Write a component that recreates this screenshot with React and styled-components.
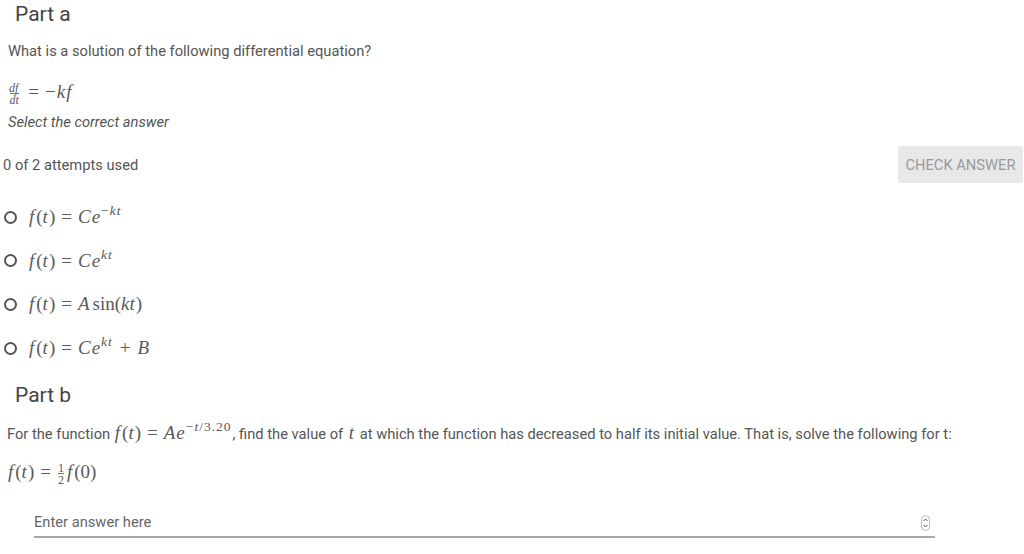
import React from 'react';
import styled, { createGlobalStyle } from 'styled-components';

const GlobalStyle = createGlobalStyle`
  body {
    margin: 0;
    background: #fff;
    font-family: Roboto, "Liberation Sans", sans-serif;
    color: #555;
  }
`;

const Page = styled.div`
  width: 1024px;
  height: 554px;
  overflow: hidden;
`;

const Heading = styled.h2`
  margin: 0;
  padding: ${({ top }) => top}px 0 0 15px;
  font-size: 21px;
  font-weight: 400;
  line-height: 28px;
  color: #444;
`;

const Text = styled.p`
  margin: ${({ top }) => top}px 0 0 ${({ left }) => left || 8}px;
  font-size: 14.7px;
  line-height: 20px;
  font-style: ${({ italic }) => (italic ? 'italic' : 'normal')};
`;

const MathLine = styled.div`
  margin: ${({ top }) => top}px 0 0 8px;
  height: 24px;
  display: flex;
  align-items: center;
`;

const M = styled.span`
  font-family: "Liberation Serif", "DejaVu Serif", serif;
  font-size: 19px;
  color: #5a5a5a;
  white-space: nowrap;
  padding: 0 ${({ pad }) => pad || 0}px;
`;

const I = styled.i`
  font-style: italic;
  padding-right: ${({ pr }) => pr || 0}px;
  padding-left: ${({ pl }) => pl || 0}px;
`;

const Op = styled.span`
  padding: 0 ${({ gap }) => (gap === undefined ? 6 : gap)}px;
`;

const Sup = styled.sup`
  font-size: 13.5px;
  vertical-align: 8px;
  line-height: 0;
  padding-left: 1px;
  letter-spacing: 1px;
`;

const Frac = styled.span`
  display: inline-flex;
  flex-direction: column;
  align-items: center;
  vertical-align: middle;
  font-size: 12px;
  line-height: 10px;
  margin: 0 3px 0 1px;
  span + span {
    border-top: 1px solid #777;
    padding-top: 1px;
  }
`;

const AttemptsRow = styled.div`
  margin-top: 14px;
  display: flex;
  justify-content: space-between;
  align-items: center;
  padding: 0 1px 0 3px;
  font-size: 14.7px;
`;

const CheckButton = styled.button`
  width: 125px;
  height: 37px;
  border: none;
  border-radius: 3px;
  background: #e8e8e8;
  color: #9a9a9a;
  font-family: Roboto, "Liberation Sans", sans-serif;
  font-size: 14.7px;
  padding: 0;
`;

const Options = styled.div`
  margin-top: 22px;
  display: flex;
  flex-direction: column;
  gap: 19.7px;
`;

const Option = styled.label`
  display: flex;
  align-items: center;
  height: 24px;
  padding-left: 4px;
  gap: 12px;
`;

const Radio = styled.span`
  width: 9px;
  height: 9px;
  border: 2px solid #555;
  border-radius: 50%;
`;

const InputWrap = styled.div`
  position: relative;
  margin: 24px 0 0 34px;
  width: 901px;
  border-bottom: 2px solid #a8a8a8;
`;

const AnswerInput = styled.input`
  width: 100%;
  box-sizing: border-box;
  border: none;
  outline: none;
  padding: 4px 0 5px;
  font-family: Roboto, "Liberation Sans", sans-serif;
  font-size: 14.7px;
  color: #555;
  background: transparent;
  &::placeholder {
    color: #666;
  }
`;

const Spinner = styled.svg`
  position: absolute;
  right: 5px;
  top: 6px;
`;

const Eq = () => <Op>=</Op>;

export default function App() {
  return (
    <Page>
      <GlobalStyle />
      <Heading top={0}>Part a</Heading>
      <Text top={13}>What is a solution of the following differential equation?</Text>
      <MathLine top={20}>
        <M>
          <Frac>
            <span><I pr={1}>df</I></span>
            <span><I>dt</I></span>
          </Frac>
          <Eq />
          −<I pl={1}>k</I><I pl={1}>f</I>
        </M>
      </MathLine>
      <Text top={7} italic>Select the correct answer</Text>
      <AttemptsRow>
        <span>0 of 2 attempts used</span>
        <CheckButton>CHECK ANSWER</CheckButton>
      </AttemptsRow>
      <Options>
        <Option>
          <Radio />
          <M><I pr={2}>f</I>(<I pr={1}>t</I>)<Eq /><I pr={1}>C</I><I>e</I><Sup>−<I>kt</I></Sup></M>
        </Option>
        <Option>
          <Radio />
          <M><I pr={2}>f</I>(<I pr={1}>t</I>)<Eq /><I pr={1}>C</I><I>e</I><Sup><I>kt</I></Sup></M>
        </Option>
        <Option>
          <Radio />
          <M><I pr={2}>f</I>(<I pr={1}>t</I>)<Eq /><I pr={3}>A</I>sin(<I pr={1}>kt</I>)</M>
        </Option>
        <Option>
          <Radio />
          <M><I pr={2}>f</I>(<I pr={1}>t</I>)<Eq /><I pr={1}>C</I><I>e</I><Sup><I>kt</I></Sup><Op gap={7}>+</Op><I>B</I></M>
        </Option>
      </Options>
      <Heading top={21}>Part b</Heading>
      <Text top={14} left={7}>
        For the function <M pad={1}><I pr={2}>f</I>(<I pr={1}>t</I>)<Eq /><I pr={1}>A</I><I>e</I><Sup>−<I>t</I>/3.20</Sup></M>, find the value of <M pad={2}><I>t</I></M> at which the function has decreased to half its initial value. That is, solve the following for t:
      </Text>
      <MathLine top={17}>
        <M>
          <I pr={2}>f</I>(<I pr={1}>t</I>)<Eq />
          <Frac>
            <span>1</span>
            <span>2</span>
          </Frac>
          <I pr={2}>f</I>(0)
        </M>
      </MathLine>
      <InputWrap>
        <AnswerInput type="text" placeholder="Enter answer here" />
        <Spinner width="9" height="16" viewBox="0 0 9 16">
          <rect x="0.5" y="0.5" width="8" height="15" rx="4" fill="#fff" stroke="#bbb" />
          <path d="M2.5 6 L4.5 4 L6.5 6" fill="none" stroke="#555" strokeWidth="1" />
          <path d="M2.5 10 L4.5 12 L6.5 10" fill="none" stroke="#555" strokeWidth="1" />
        </Spinner>
      </InputWrap>
    </Page>
  );
}
